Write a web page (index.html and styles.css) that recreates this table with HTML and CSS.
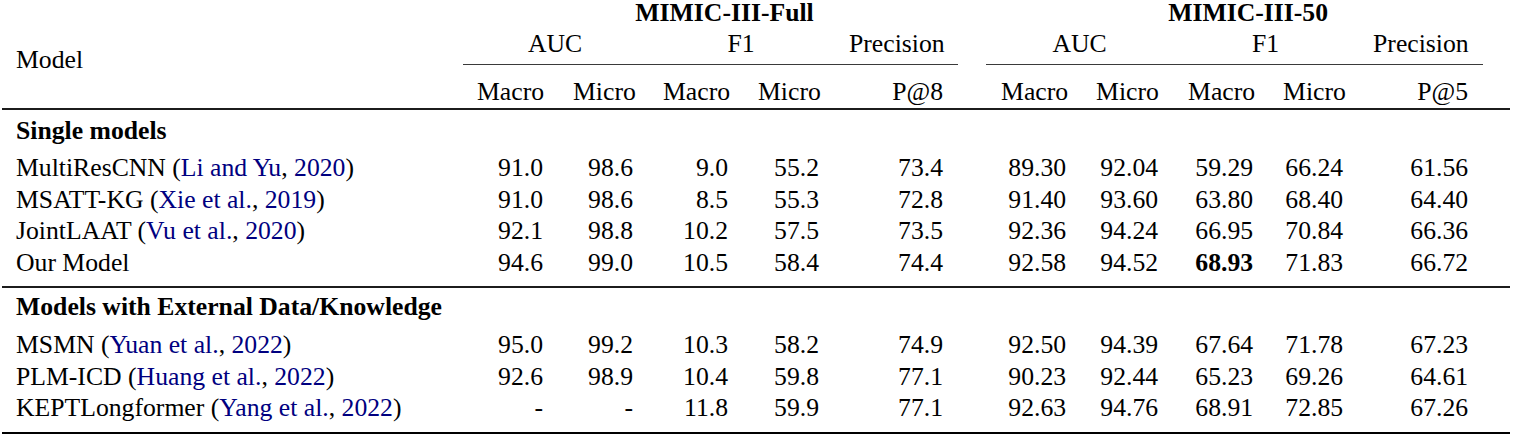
FILE: index.html
```html
<!DOCTYPE html>
<html lang="en">
<head>
<meta charset="utf-8">
<title>Results table</title>
<link rel="stylesheet" href="styles.css">
</head>
<body>
<table class="results">
  <colgroup>
    <col class="c-model">
    <col class="c-w95"><col class="c-w90"><col class="c-w95"><col class="c-w91"><col class="c-prec1">
    <col class="c-sp1">
    <col class="c-w95"><col class="c-w92"><col class="c-w95"><col class="c-w90"><col class="c-prec2">
    <col class="c-sp2">
  </colgroup>
  <thead>
    <tr class="grp">
      <td class="model-head" rowspan="3">Model</td>
      <td class="dataset" colspan="6">MIMIC-III-Full</td>
      <td class="dataset" colspan="6">MIMIC-III-50</td>
    </tr>
    <tr class="metric">
      <td class="cmid center" colspan="2">AUC</td>
      <td class="cmid center" colspan="2">F1</td>
      <td class="cmid center">Precision</td>
      <td></td>
      <td class="cmid center" colspan="2">AUC</td>
      <td class="cmid center" colspan="2">F1</td>
      <td class="cmid center">Precision</td>
      <td></td>
    </tr>
    <tr class="sub">
      <td class="num">Macro</td><td class="num">Micro</td><td class="num">Macro</td><td class="num">Micro</td><td class="num">P@8</td><td></td>
      <td class="num">Macro</td><td class="num">Micro</td><td class="num">Macro</td><td class="num">Micro</td><td class="num">P@5</td><td></td>
    </tr>
  </thead>
  <tbody>
    <tr class="section first-section">
      <td colspan="13">Single models</td>
    </tr>
    <tr class="row">
      <td class="name">MultiResCNN (<span class="cite">Li and Yu</span>, <span class="cite">2020</span>)</td>
      <td class="num">91.0</td><td class="num">98.6</td><td class="num">9.0</td><td class="num">55.2</td><td class="num">73.4</td><td></td>
      <td class="num">89.30</td><td class="num">92.04</td><td class="num">59.29</td><td class="num">66.24</td><td class="num">61.56</td><td></td>
    </tr>
    <tr class="row">
      <td class="name">MSATT-KG (<span class="cite">Xie et al.</span>, <span class="cite">2019</span>)</td>
      <td class="num">91.0</td><td class="num">98.6</td><td class="num">8.5</td><td class="num">55.3</td><td class="num">72.8</td><td></td>
      <td class="num">91.40</td><td class="num">93.60</td><td class="num">63.80</td><td class="num">68.40</td><td class="num">64.40</td><td></td>
    </tr>
    <tr class="row">
      <td class="name">JointLAAT (<span class="cite">Vu et al.</span>, <span class="cite">2020</span>)</td>
      <td class="num">92.1</td><td class="num">98.8</td><td class="num">10.2</td><td class="num">57.5</td><td class="num">73.5</td><td></td>
      <td class="num">92.36</td><td class="num">94.24</td><td class="num">66.95</td><td class="num">70.84</td><td class="num">66.36</td><td></td>
    </tr>
    <tr class="row end-single">
      <td class="name">Our Model</td>
      <td class="num">94.6</td><td class="num">99.0</td><td class="num">10.5</td><td class="num">58.4</td><td class="num">74.4</td><td></td>
      <td class="num">92.58</td><td class="num">94.52</td><td class="num best">68.93</td><td class="num">71.83</td><td class="num">66.72</td><td></td>
    </tr>
    <tr class="section second-section">
      <td colspan="13">Models with External Data/Knowledge</td>
    </tr>
    <tr class="row">
      <td class="name">MSMN (<span class="cite">Yuan et al.</span>, <span class="cite">2022</span>)</td>
      <td class="num">95.0</td><td class="num">99.2</td><td class="num">10.3</td><td class="num">58.2</td><td class="num">74.9</td><td></td>
      <td class="num">92.50</td><td class="num">94.39</td><td class="num">67.64</td><td class="num">71.78</td><td class="num">67.23</td><td></td>
    </tr>
    <tr class="row">
      <td class="name">PLM-ICD (<span class="cite">Huang et al.</span>, <span class="cite">2022</span>)</td>
      <td class="num">92.6</td><td class="num">98.9</td><td class="num">10.4</td><td class="num">59.8</td><td class="num">77.1</td><td></td>
      <td class="num">90.23</td><td class="num">92.44</td><td class="num">65.23</td><td class="num">69.26</td><td class="num">64.61</td><td></td>
    </tr>
    <tr class="row end-table">
      <td class="name">KEPTLongformer (<span class="cite">Yang et al.</span>, <span class="cite">2022</span>)</td>
      <td class="num">-</td><td class="num">-</td><td class="num">11.8</td><td class="num">59.9</td><td class="num">77.1</td><td></td>
      <td class="num">92.63</td><td class="num">94.76</td><td class="num">68.91</td><td class="num">72.85</td><td class="num">67.26</td><td></td>
    </tr>
  </tbody>
</table>
</body>
</html>
```

FILE: styles.css
```css
html, body {
  margin: 0;
  padding: 0;
  background: #ffffff;
}

body {
  font-family: "Liberation Serif", "Times New Roman", serif;
  font-size: 25.7px;
  color: #000000;
}

.results {
  margin-left: 2px;
  width: 1508px;
  table-layout: fixed;
  border-collapse: separate;
  border-spacing: 0;
}

.c-model { width: 461px; }
.c-w95 { width: 95px; }
.c-w90 { width: 90px; }
.c-w91 { width: 91px; }
.c-w92 { width: 92px; }
.c-prec1 { width: 124px; }
.c-prec2 { width: 125px; }
.c-sp1 { width: 28px; }
.c-sp2 { width: 27px; }

.results td {
  padding: 0 15px;
  line-height: 31.7px;
  white-space: nowrap;
  vertical-align: top;
  font-weight: normal;
}

.results td:first-child {
  padding-left: 14px;
}

.num { text-align: right; }
.center { text-align: center; }

/* header rows */
.grp td {
  line-height: 26px;
  padding-bottom: 2px;
}

.dataset {
  font-weight: bold !important;
  text-align: center;
}

.results td.model-head {
  padding-top: 44px;
  line-height: 32px;
  border-bottom: 2px solid #1c1c1c;
}

.metric td {
  line-height: 32px;
  padding-bottom: 4px;
}

.metric td.cmid {
  border-bottom: 1px solid #3a3a3a;
}

.sub td {
  line-height: 32px;
  padding-top: 11px;
  border-bottom: 2px solid #1c1c1c;
}

/* body rows */
.section td {
  font-weight: bold;
  line-height: 32px;
}

.first-section td {
  padding-top: 5px;
  padding-bottom: 5px;
}

.second-section td {
  padding-top: 3px;
  padding-bottom: 6px;
}

.end-single td {
  padding-bottom: 7.2px;
  border-bottom: 2px solid #1c1c1c;
}

.end-table td {
  padding-bottom: 8px;
  border-bottom: 2px solid #000000;
}

.cite {
  color: #000080;
}

.results td.best {
  font-weight: bold;
}
```
